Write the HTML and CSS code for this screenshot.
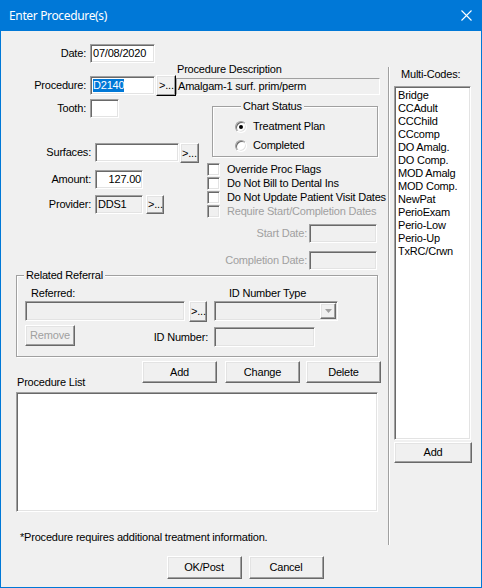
FILE: index.html
```html
<!DOCTYPE html>
<html>
	<head>
		<meta charset="UTF-8">
		<title>Enter Procedure(s)</title>
		<link rel="stylesheet" href="styles.css">
	</head>
	<body>
		<div class="window">
			<div class="titlebar">
				<span class="title">Enter Procedure(s)</span>
				<svg class="close" width="11" height="11" viewBox="0 0 11 11">
					<path d="M0.5 0.5L10.5 10.5M10.5 0.5L0.5 10.5" stroke="#fff" stroke-width="1.1" fill="none"/>
				</svg>
			</div>
			<div class="client">
				<div class="top">
					<div class="main">
						<!-- date / procedure -->
						<div class="row date-row">
							<span class="lbl lbl-a">Date:</span>
							<span class="edit w-date">07/08/2020</span>
						</div>
						<div class="proc-row">
							<span class="lbl lbl-a proc-lbl">Procedure:</span>
							<span class="edit w-date proc-edit"><span class="sel">D2140</span></span>
							<span class="btn btn-pick">&gt;...</span>
							<div class="desc">
								<div class="desc-lbl">Procedure Description</div>
								<div class="static desc-box">Amalgam-1 surf. prim/perm</div>
							</div>
						</div>

						<div class="mid">
							<div class="mid-left">
								<div class="row tooth-row">
									<span class="lbl lbl-a">Tooth:</span>
									<span class="edit w-tooth"></span>
								</div>
								<div class="row surf-row">
									<span class="lbl lbl-b">Surfaces:</span>
									<span class="edit w-surf"></span>
									<span class="btn btn-surf">&gt;...</span>
								</div>
								<div class="row amt-row">
									<span class="lbl lbl-b">Amount:</span>
									<span class="edit w-amt num">127.00</span>
								</div>
								<div class="row prov-row">
									<span class="lbl lbl-b">Provider:</span>
									<span class="edit ro w-amt">DDS1</span>
									<span class="btn btn-prov">&gt;...</span>
								</div>
							</div>
							<div class="mid-right">
								<fieldset class="group chart">
									<legend>Chart Status</legend>
									<div class="opt opt-first"><span class="radio on"></span>Treatment Plan</div>
									<div class="opt"><span class="radio"></span>Completed</div>
								</fieldset>
								<div class="checks">
									<div class="chk-row"><span class="check"></span>Override Proc Flags</div>
									<div class="chk-row"><span class="check"></span>Do Not Bill to Dental Ins</div>
									<div class="chk-row"><span class="check"></span>Do Not Update Patient Visit Dates</div>
									<div class="chk-row dis"><span class="check"></span>Require Start/Completion Dates</div>
								</div>
								<div class="row date-field start">
									<span class="lbl dis">Start Date:</span>
									<span class="edit ro w-dt"></span>
								</div>
								<div class="row date-field comp">
									<span class="lbl dis">Completion Date:</span>
									<span class="edit ro w-dt"></span>
								</div>
							</div>
						</div>

						<!-- referral -->
						<fieldset class="group referral">
							<legend>Related Referral</legend>
							<div class="ref-labels">
								<span class="ref-lbl1">Referred:</span><span>ID Number Type</span>
							</div>
							<div class="ref-row1">
								<span class="edit ro w-ref"></span>
								<span class="btn btn-ref">&gt;...</span>
								<span class="edit ro combo">
									<span class="btn drop">
										<svg width="7" height="4" viewBox="0 0 7 4"><polygon points="0,0 7,0 3.5,4" fill="#a0a0a0"/></svg>
									</span>
								</span>
							</div>
							<div class="ref-row2">
								<span class="btn dis btn-remove">Remove</span>
								<span class="lbl idn-lbl">ID Number:</span>
								<span class="edit ro w-idn"></span>
							</div>
						</fieldset>

						<div class="list-head">
							<span class="list-lbl">Procedure List</span>
							<span class="btn w-btn">Add</span>
							<span class="btn w-btn change">Change</span>
							<span class="btn w-btn del">Delete</span>
						</div>
						<div class="list proc-list"></div>
						<p class="note">*Procedure requires additional treatment information.</p>
					</div>

					<!-- multi codes -->
					<div class="side">
						<div class="side-lbl">Multi-Codes:</div>
						<div class="list codes">
							<div>Bridge</div>
							<div>CCAdult</div>
							<div>CCChild</div>
							<div>CCcomp</div>
							<div>DO Amalg.</div>
							<div>DO Comp.</div>
							<div>MOD Amalg</div>
							<div>MOD Comp.</div>
							<div>NewPat</div>
							<div>PerioExam</div>
							<div>Perio-Low</div>
							<div>Perio-Up</div>
							<div>TxRC/Crwn</div>
						</div>
						<span class="btn side-add">Add</span>
					</div>
				</div>
				<div class="footer">
					<span class="btn w-btn ok">OK/Post</span>
					<span class="btn w-btn cancel">Cancel</span>
				</div>
			</div>
		</div>
	</body>
</html>
```

FILE: styles.css
```css
*{
	margin: 0;
	padding: 0;
	box-sizing: border-box;
}
body{
	font: 11px/13px "Liberation Sans", Arial, sans-serif;
	letter-spacing: -0.2px;
	color: #000;
	background: #fff;
}
.window{
	width: 482px;
	height: 588px;
	display: flex;
	flex-direction: column;
}
.titlebar{
	height: 31px;
	flex: none;
	background: #0078d7;
	color: #fff;
	display: flex;
	align-items: center;
	justify-content: space-between;
	padding: 0 10px 0 9px;
	font: 12px/31px "Noto Sans", sans-serif;
	letter-spacing: -0.35px;
}
.client{
	flex: 1;
	background: #f0f0f0;
	border: 1px solid #0078d7;
	border-top: none;
	display: flex;
	flex-direction: column;
}
.top{
	display: flex;
	height: 514px;
}
.main{
	width: 387px;
	padding-top: 13px;
}

/* controls */
.lbl{
	white-space: nowrap;
	text-align: right;
}
.dis{
	color: #a0a0a0;
}
.edit{
	display: flex;
	align-items: center;
	background: #fff;
	border: 1px solid;
	border-color: #a0a0a0 #fff #fff #a0a0a0;
	box-shadow: inset 1px 1px #696969, inset -1px -1px #e3e3e3;
	padding: 0 2px;
	white-space: nowrap;
}
.edit.ro{
	background: #f0f0f0;
}
.static{
	background: #f0f0f0;
	border: 1px solid;
	border-color: #a0a0a0 #fff #fff #a0a0a0;
	padding-left: 1px;
	display: flex;
	align-items: center;
}
.btn{
	display: flex;
	align-items: center;
	justify-content: center;
	background: #f0f0f0;
	border: 1px solid;
	border-color: #fff #696969 #696969 #fff;
	box-shadow: inset -1px -1px #a0a0a0, inset 1px 1px #e3e3e3;
	white-space: nowrap;
}
.list{
	background: #fff;
	border: 1px solid;
	border-color: #a0a0a0 #fff #fff #a0a0a0;
	box-shadow: inset 1px 1px #696969, inset -1px -1px #e3e3e3;
}
.group{
	border: 1px solid #a0a0a0;
	box-shadow: inset 1px 1px #fff, 1px 1px #fff;
	min-inline-size: 0;
}
.group legend{
	padding: 0 2px;
	background: #f0f0f0;
}

/* top rows */
.row{
	display: flex;
	align-items: center;
}
.lbl-a{
	width: 85px;
	margin-right: 4px;
}
.lbl-b{
	width: 90px;
	margin-right: 4px;
}
.date-row{
	height: 19px;
}
.w-date{
	width: 65px;
	height: 19px;
}
.proc-row{
	display: flex;
	align-items: flex-end;
	height: 33px;
}
.proc-lbl{
	margin-bottom: 4px;
}
.proc-edit{
	margin-bottom: 1px;
}
.sel{
	background: #0078d7;
	color: #fff;
}
.btn-pick{
	width: 20px;
	height: 21px;
	margin-left: 1px;
	border-color: #fff #000 #000 #fff;
	justify-content: flex-start;
	padding-left: 2px;
}
.desc{
	width: 204px;
	margin-bottom: 1px;
}
.desc-lbl{
	padding-left: 1px;
}
.desc-box{
	height: 17px;
	margin-top: 2px;
}

/* middle block */
.mid{
	display: flex;
	height: 174px;
}
.mid-left{
	width: 206px;
}
.mid-right{
	width: 181px;
}
.tooth-row{
	margin-top: 3px;
	height: 19px;
}
.w-tooth{
	width: 29px;
	height: 19px;
}
.surf-row{
	margin-top: 25px;
	height: 20px;
	align-items: flex-start;
}
.surf-row .lbl{
	line-height: 19px;
}
.w-surf{
	width: 84px;
	height: 19px;
}
.btn-surf{
	width: 19px;
	height: 20px;
	margin-left: 1px;
	justify-content: flex-start;
	padding-left: 1px;
}
.amt-row{
	margin-top: 7px;
	height: 19px;
}
.w-amt{
	width: 48px;
	height: 19px;
}
.num{
	justify-content: flex-end;
	padding-right: 1px;
}
.prov-row{
	margin-top: 6px;
	height: 19px;
}
.btn-prov{
	width: 18px;
	height: 19px;
	margin-left: 3px;
	justify-content: flex-start;
	padding-left: 1px;
}

.chart{
	width: 166px;
	margin: 4px 0 0 5px;
	padding: 0 0 4px 22px;
}
.chart legend{
	line-height: 13px;
	margin-left: 6px;
}
.opt{
	display: flex;
	align-items: center;
	height: 13px;
	margin-top: 6px;
}
.opt-first{
	margin-top: 7px;
}
.radio{
	width: 12px;
	height: 12px;
	margin-right: 6px;
	border-radius: 50%;
	background: #fff;
	border: 1px solid;
	border-color: #a0a0a0 #fff #fff #a0a0a0;
	box-shadow: inset 1px 1px #696969, inset -1px -1px #e3e3e3;
	position: relative;
}
.radio.on::after{
	content: "";
	position: absolute;
	left: 3px;
	top: 3px;
	width: 4px;
	height: 4px;
	border-radius: 50%;
	background: #000;
}
.checks{
	margin-top: 6px;
}
.chk-row{
	display: flex;
	align-items: center;
	height: 13px;
	margin-top: 1px;
	white-space: nowrap;
}
.chk-row:first-child{
	margin-top: 0;
}
.check{
	width: 13px;
	height: 13px;
	margin-right: 7px;
	background: #fff;
	border: 1px solid;
	border-color: #a0a0a0 #fff #fff #a0a0a0;
	box-shadow: inset 1px 1px #696969, inset -1px -1px #e3e3e3;
}
.chk-row.dis .check{
	background: #f0f0f0;
}
.date-field{
	justify-content: flex-end;
	padding-right: 11px;
	height: 19px;
}
.date-field .lbl{
	margin-right: 2px;
}
.start{
	margin-top: 6px;
}
.comp{
	margin-top: 8px;
}
.w-dt{
	width: 68px;
	height: 19px;
}

/* referral */
.referral{
	width: 362px;
	margin-left: 15px;
	padding: 0 0 9px 0;
}
.referral legend{
	line-height: 10px;
	margin-left: 7px;
}
.ref-labels{
	margin-top: 7px;
	padding-left: 14px;
	display: flex;
}
.ref-lbl1{
	width: 198px;
}
.ref-row1{
	display: flex;
	align-items: flex-start;
	margin-top: 1px;
	padding-left: 8px;
}
.w-ref{
	width: 160px;
	height: 20px;
}
.btn-ref{
	width: 18px;
	height: 21px;
	margin-left: 4px;
	justify-content: flex-start;
	padding-left: 1px;
}
.combo{
	width: 124px;
	height: 20px;
	margin-left: 7px;
	padding: 1px;
	justify-content: flex-end;
}
.drop{
	width: 16px;
	height: 16px;
}
.ref-row2{
	display: flex;
	align-items: flex-start;
	margin-top: 3px;
	padding-left: 8px;
}
.btn-remove{
	width: 50px;
	height: 21px;
}
.idn-lbl{
	width: 133px;
	margin: 2px 6px 0 0;
	line-height: 20px;
}
.w-idn{
	width: 101px;
	height: 20px;
	margin-top: 2px;
}

/* procedure list */
.list-head{
	display: flex;
	align-items: flex-start;
	margin-top: 4px;
	padding-right: 7px;
}
.list-lbl{
	flex: 1;
	margin: 15px 0 0 16px;
}
.w-btn{
	width: 75px;
	height: 22px;
}
.change{
	margin-left: 8px;
}
.del{
	margin-left: 6px;
}
.proc-list{
	width: 362px;
	height: 120px;
	margin: 3px 0 0 15px;
}
.note{
	margin: 19px 0 0 19px;
	white-space: nowrap;
}

/* multi codes */
.side{
	width: 93px;
	height: 478px;
	margin-top: 36px;
	border-left: 1px solid #a0a0a0;
	box-shadow: inset 1px 0 #fff;
	padding: 1px 0 0 5px;
}
.side-lbl{
	padding-left: 7px;
}
.codes{
	width: 77px;
	height: 354px;
	margin-top: 5px;
	padding: 2px 0 0 3px;
}
.side-add{
	width: 78px;
	height: 21px;
	margin-top: 2px;
}

/* bottom */
.footer{
	display: flex;
	justify-content: center;
	padding-left: 8px;
	margin-top: 11px;
}
.ok{
	height: 23px;
}
.cancel{
	height: 23px;
	margin-left: 7px;
}
```
